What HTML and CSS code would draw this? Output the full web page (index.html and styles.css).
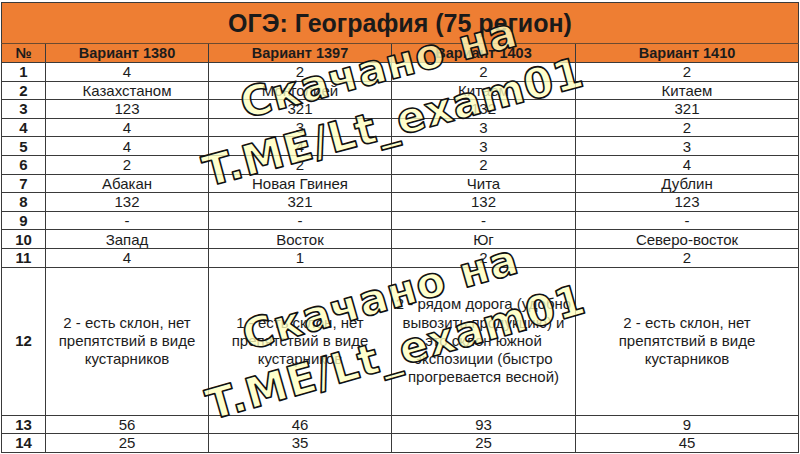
FILE: index.html
```html
<!DOCTYPE html>
<html lang="ru">
<head>
<meta charset="utf-8">
<title>ОГЭ: География (75 регион)</title>
<link rel="stylesheet" href="styles.css">
</head>
<body>
<div class="page">
<table class="grid">
  <colgroup>
    <col class="c-num">
    <col class="c-a">
    <col class="c-b">
    <col class="c-c">
    <col class="c-d">
  </colgroup>
  <thead>
    <tr class="title-row"><th colspan="5" class="title">ОГЭ: География (75 регион)</th></tr>
    <tr class="head-row">
      <th>№</th><th>Вариант 1380</th><th>Вариант 1397</th><th>Вариант 1403</th><th>Вариант 1410</th>
    </tr>
  </thead>
  <tbody>
    <tr class="r"><td class="n">1</td><td>4</td><td>2</td><td>2</td><td>2</td></tr>
    <tr class="r"><td class="n">2</td><td>Казахстаном</td><td>Монголией</td><td>Китаем</td><td>Китаем</td></tr>
    <tr class="r"><td class="n">3</td><td>123</td><td>321</td><td>132</td><td>321</td></tr>
    <tr class="r"><td class="n">4</td><td>4</td><td>3</td><td>3</td><td>2</td></tr>
    <tr class="r"><td class="n">5</td><td>4</td><td>4</td><td>3</td><td>3</td></tr>
    <tr class="r"><td class="n">6</td><td>2</td><td>2</td><td>2</td><td>4</td></tr>
    <tr class="r"><td class="n">7</td><td>Абакан</td><td>Новая Гвинея</td><td>Чита</td><td>Дублин</td></tr>
    <tr class="r"><td class="n">8</td><td>132</td><td>321</td><td>132</td><td>123</td></tr>
    <tr class="r"><td class="n">9</td><td>-</td><td>-</td><td>-</td><td>-</td></tr>
    <tr class="r"><td class="n">10</td><td>Запад</td><td>Восток</td><td>Юг</td><td>Северо-восток</td></tr>
    <tr class="r"><td class="n">11</td><td>4</td><td>1</td><td>2</td><td>2</td></tr>
    <tr class="big"><td class="n">12</td>
      <td>2 - есть склон, нет<br>препятствий в виде<br>кустарников</td>
      <td>1 - есть склон, нет<br>препятствий в виде<br>кустарников</td>
      <td>2 - рядом дорога (удобно<br>вывозить продукцию) и<br>это склон южной<br>экспозиции (быстро<br>прогревается весной)</td>
      <td>2 - есть склон, нет<br>препятствий в виде<br>кустарников</td>
    </tr>
    <tr class="r"><td class="n">13</td><td>56</td><td>46</td><td>93</td><td>9</td></tr>
    <tr class="r"><td class="n">14</td><td>25</td><td>35</td><td>25</td><td>45</td></tr>
  </tbody>
</table>
<svg class="watermark" width="800" height="454" viewBox="0 0 800 454" aria-hidden="true">
  <g transform="translate(397,136) rotate(-15)">
    <text class="wm" x="0" y="-56">Скачано на</text>
    <text class="wm" x="0" y="0">T.ME/Lt_exam01</text>
  </g>
  <g transform="translate(400,366) rotate(-16)">
    <text class="wm" x="0" y="-57">Скачано на</text>
    <text class="wm" x="0" y="0">T.ME/Lt_exam01</text>
  </g>
</svg>
</div>
</body>
</html>
```

FILE: styles.css
```css
html, body {
  margin: 0;
  padding: 0;
  background: #ffffff;
}
.page {
  position: relative;
  width: 800px;
  height: 454px;
  overflow: hidden;
  padding: 2px 0 0 1px;
  box-sizing: border-box;
}
.grid {
  border-collapse: collapse;
  table-layout: fixed;
  width: 797px;
  font-family: "Liberation Sans", Arial, sans-serif;
  color: #1c1c1c;
}
.c-num { width: 44px; }
.c-a { width: 163px; }
.c-b { width: 183px; }
.c-c { width: 184px; }
.c-d { width: 223px; }
.grid th, .grid td {
  border: 1px solid #3a3a3a;
  padding: 0 2px;
  text-align: center;
  vertical-align: middle;
  overflow: hidden;
  white-space: nowrap;
}
.title-row th {
  height: 40px;
  background: #ee7e33;
  font-size: 25px;
  font-weight: bold;
  color: #1a1a1a;
  border-bottom: 1px solid #6b4a30;
}
.head-row th {
  height: 18px;
  background: #ee7e33;
  font-size: 14.5px;
  font-weight: bold;
  line-height: 17px;
}
.r td {
  height: 17.6px;
  font-size: 15px;
  line-height: 17px;
}
.big td {
  height: 147px;
  font-size: 15px;
  line-height: 18.3px;
}
.grid td.n {
  font-weight: bold;
}
.watermark {
  position: absolute;
  left: 0;
  top: 0;
  pointer-events: none;
}
.wm {
  font-family: "DejaVu Sans", sans-serif;
  font-weight: bold;
  font-size: 42px;
  letter-spacing: 1px;
  text-anchor: middle;
  fill: rgba(255, 255, 190, 0.78);
  stroke: #111111;
  stroke-width: 1.6px;
  stroke-linejoin: round;
}
```
